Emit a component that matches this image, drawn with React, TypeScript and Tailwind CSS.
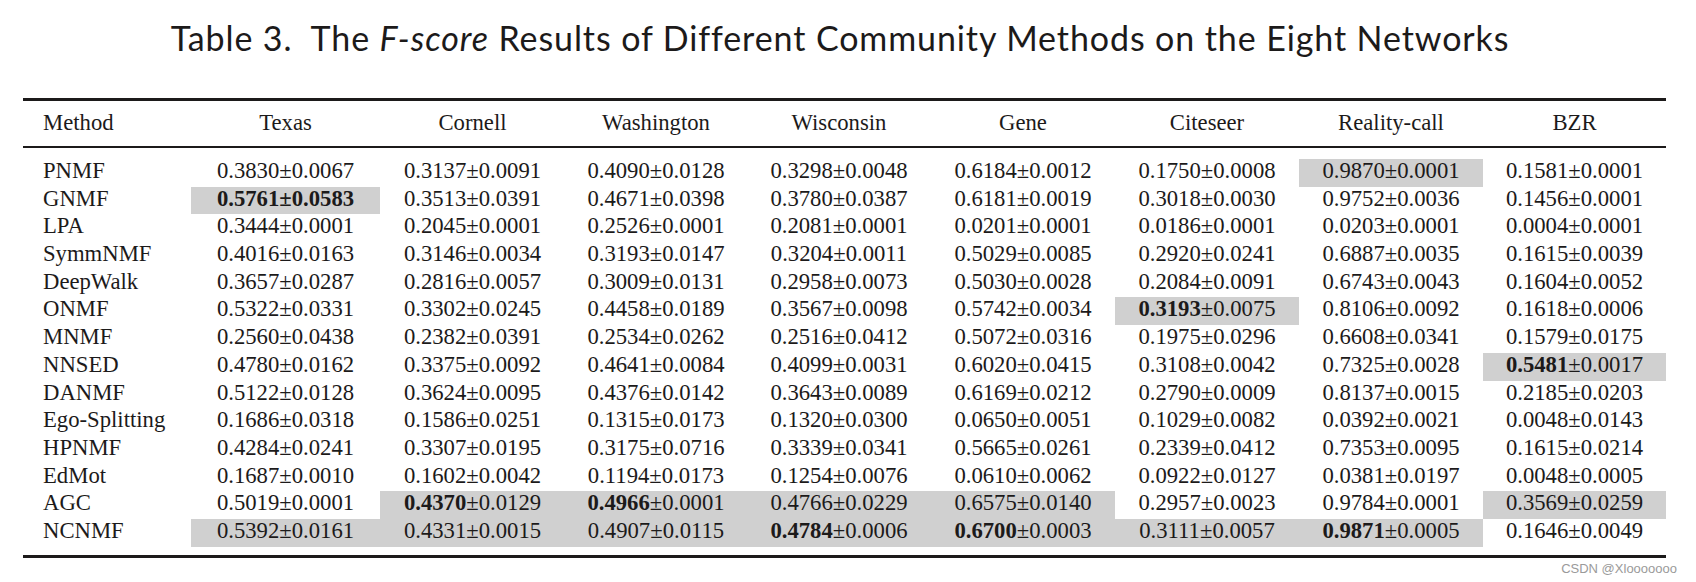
import React from "react";

const rows: string[][] = [
  ["PNMF", "0.3830±0.0067", "0.3137±0.0091", "0.4090±0.0128", "0.3298±0.0048", "0.6184±0.0012", "0.1750±0.0008", "0.9870±0.0001", "0.1581±0.0001"],
  ["GNMF", "0.5761±0.0583", "0.3513±0.0391", "0.4671±0.0398", "0.3780±0.0387", "0.6181±0.0019", "0.3018±0.0030", "0.9752±0.0036", "0.1456±0.0001"],
  ["LPA", "0.3444±0.0001", "0.2045±0.0001", "0.2526±0.0001", "0.2081±0.0001", "0.0201±0.0001", "0.0186±0.0001", "0.0203±0.0001", "0.0004±0.0001"],
  ["SymmNMF", "0.4016±0.0163", "0.3146±0.0034", "0.3193±0.0147", "0.3204±0.0011", "0.5029±0.0085", "0.2920±0.0241", "0.6887±0.0035", "0.1615±0.0039"],
  ["DeepWalk", "0.3657±0.0287", "0.2816±0.0057", "0.3009±0.0131", "0.2958±0.0073", "0.5030±0.0028", "0.2084±0.0091", "0.6743±0.0043", "0.1604±0.0052"],
  ["ONMF", "0.5322±0.0331", "0.3302±0.0245", "0.4458±0.0189", "0.3567±0.0098", "0.5742±0.0034", "0.3193±0.0075", "0.8106±0.0092", "0.1618±0.0006"],
  ["MNMF", "0.2560±0.0438", "0.2382±0.0391", "0.2534±0.0262", "0.2516±0.0412", "0.5072±0.0316", "0.1975±0.0296", "0.6608±0.0341", "0.1579±0.0175"],
  ["NNSED", "0.4780±0.0162", "0.3375±0.0092", "0.4641±0.0084", "0.4099±0.0031", "0.6020±0.0415", "0.3108±0.0042", "0.7325±0.0028", "0.5481±0.0017"],
  ["DANMF", "0.5122±0.0128", "0.3624±0.0095", "0.4376±0.0142", "0.3643±0.0089", "0.6169±0.0212", "0.2790±0.0009", "0.8137±0.0015", "0.2185±0.0203"],
  ["Ego-Splitting", "0.1686±0.0318", "0.1586±0.0251", "0.1315±0.0173", "0.1320±0.0300", "0.0650±0.0051", "0.1029±0.0082", "0.0392±0.0021", "0.0048±0.0143"],
  ["HPNMF", "0.4284±0.0241", "0.3307±0.0195", "0.3175±0.0716", "0.3339±0.0341", "0.5665±0.0261", "0.2339±0.0412", "0.7353±0.0095", "0.1615±0.0214"],
  ["EdMot", "0.1687±0.0010", "0.1602±0.0042", "0.1194±0.0173", "0.1254±0.0076", "0.0610±0.0062", "0.0922±0.0127", "0.0381±0.0197", "0.0048±0.0005"],
  ["AGC", "0.5019±0.0001", "0.4370±0.0129", "0.4966±0.0001", "0.4766±0.0229", "0.6575±0.0140", "0.2957±0.0023", "0.9784±0.0001", "0.3569±0.0259"],
  ["NCNMF", "0.5392±0.0161", "0.4331±0.0015", "0.4907±0.0115", "0.4784±0.0006", "0.6700±0.0003", "0.3111±0.0057", "0.9871±0.0005", "0.1646±0.0049"],
];

const gray = new Set([
  "0-7", "1-1", "5-6", "7-8",
  "12-2", "12-3", "12-4", "12-5", "12-8",
  "13-1", "13-2", "13-3", "13-4", "13-5", "13-6", "13-7",
]);
const boldMean = new Set(["5-6", "7-8", "12-2", "12-3", "13-4", "13-5", "13-7"]);
const boldAll = new Set(["1-1"]);

const headers = ["Texas", "Cornell", "Washington", "Wisconsin", "Gene", "Citeseer", "Reality-call", "BZR"];

const gridCols =
  "grid grid-cols-[168px_189px_185px_182px_184px_184px_184px_184px_183px]";

function Cell({ r, c, v }: { r: number; c: number; v: string }) {
  const key = `${r}-${c}`;
  const bg = gray.has(key) ? "bg-[#d0d0d0]" : "";
  const [m, s] = v.split("±");
  let content: React.ReactNode;
  if (boldAll.has(key)) {
    content = <span className="font-bold">{v}</span>;
  } else if (boldMean.has(key)) {
    content = (
      <>
        <span className="font-bold">{m}</span>±{s}
      </>
    );
  } else {
    content = v;
  }
  return (
    <div className={`h-[27.7px] pt-[1px] text-center leading-[22px] ${bg}`}>{content}</div>
  );
}

export default function App() {
  return (
    <div className="w-[1696px] h-[582px] bg-white text-[#1c1a1a] overflow-hidden">
      <div className="h-[98px] pt-[18px] ml-[23px] w-[1643px] text-center">
        <div
          className="text-[34px] leading-[40px] tracking-[0.9px] text-[#1c1a1a] pr-[9px]"
          style={{ fontFamily: "Lato, 'Open Sans', sans-serif" }}
        >
          Table 3.&nbsp; The <span className="italic">F-score</span> Results of Different Community Methods on the Eight Networks
        </div>
      </div>
      <div
        className="ml-[23px] w-[1643px] text-[22.7px]"
        style={{ fontFamily: "'Liberation Serif', serif" }}
      >
        <div className="h-[3px] bg-[#1c1a1a]" />
        <div className={`${gridCols} h-[45px]`}>
          <div className="pl-[20px] pt-[11.2px] leading-[22px]">Method</div>
          {headers.map((h) => (
            <div key={h} className="text-center pt-[11.2px] leading-[22px]">
              {h}
            </div>
          ))}
        </div>
        <div className="h-[2px] bg-[#1c1a1a]" />
        <div className="h-[11px]" />
        {rows.map((row, r) => (
          <div key={row[0]} className={gridCols}>
            <div className="h-[27.7px] pt-[1px] pl-[20px] leading-[22px]">{row[0]}</div>
            {row.slice(1).map((v, i) => (
              <Cell key={i} r={r} c={i + 1} v={v} />
            ))}
          </div>
        ))}
        <div className="h-[8px]" />
        <div className="h-[3px] bg-[#1c1a1a]" />
      </div>
      <div
        className="mt-[4px] pr-[19px] text-right text-[13px] leading-[14px] text-[#9a9a9a]"
        style={{ fontFamily: "'Liberation Sans', Arial, sans-serif" }}
      >
        CSDN @Xlooooooo
      </div>
    </div>
  );
}
